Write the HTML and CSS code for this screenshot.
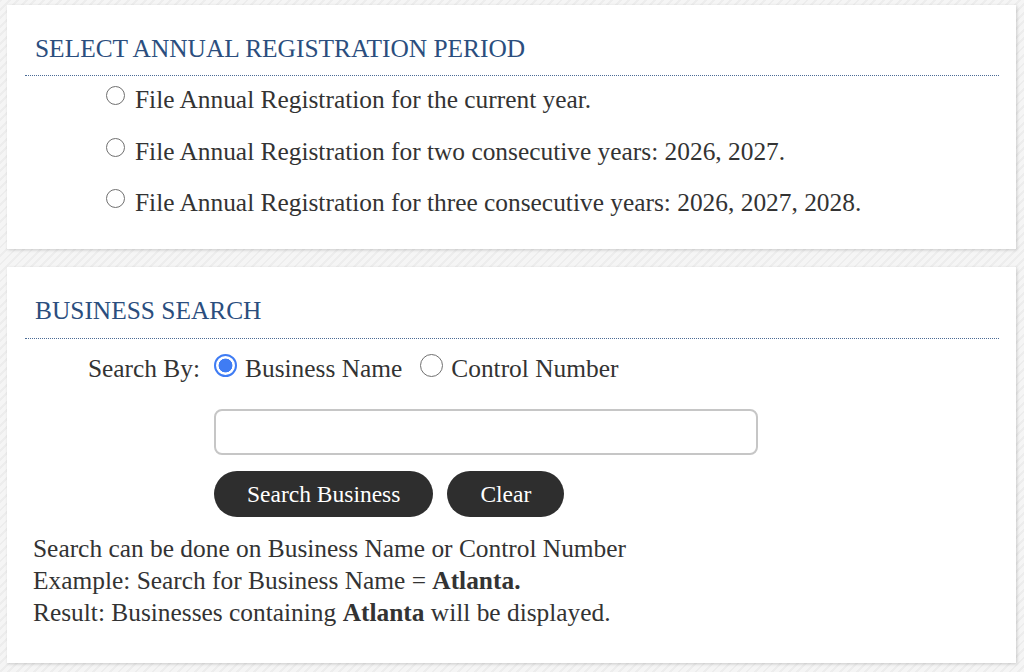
FILE: index.html
```html
<!DOCTYPE html>
<html lang="en">
<head>
<meta charset="utf-8">
<title>Annual Registration</title>
<link rel="stylesheet" href="styles.css">
</head>
<body>
<main class="page">
  <section class="panel panel-period">
    <h2 class="panel-title">SELECT ANNUAL REGISTRATION PERIOD</h2>
    <div class="options">
      <label class="option"><input type="radio" name="period" class="radio radio-sm"><span>File Annual Registration for the current year.</span></label>
      <label class="option"><input type="radio" name="period" class="radio radio-sm"><span>File Annual Registration for two consecutive years: 2026, 2027.</span></label>
      <label class="option"><input type="radio" name="period" class="radio radio-sm"><span>File Annual Registration for three consecutive years: 2026, 2027, 2028.</span></label>
    </div>
  </section>

  <section class="panel panel-search">
    <h2 class="panel-title">BUSINESS SEARCH</h2>
    <form class="search-form" onsubmit="return false;">
      <span class="search-label">Search By:</span>
      <div class="search-by">
        <label class="choice"><input type="radio" name="by" class="radio radio-lg" checked><span>Business Name</span></label>
        <label class="choice"><input type="radio" name="by" class="radio radio-lg"><span>Control Number</span></label>
      </div>
      <input type="text" class="search-input" aria-label="Search text">
      <div class="actions">
        <button type="button" class="btn">Search Business</button>
        <button type="button" class="btn">Clear</button>
      </div>
    </form>
    <div class="info">
      <div>Search can be done on Business Name or Control Number</div>
      <div>Example: Search for Business Name = <strong>Atlanta.</strong></div>
      <div>Result: Businesses containing <strong>Atlanta</strong> will be displayed.</div>
    </div>
  </section>
</main>
</body>
</html>
```

FILE: styles.css
```css
html, body {
  margin: 0;
  padding: 0;
}

body {
  font-family: "Liberation Serif", "Times New Roman", serif;
  color: #333333;
  background-color: #f1f1f1;
  background-image: repeating-linear-gradient(135deg, #ededed 0, #ededed 2px, #f5f5f5 2px, #f5f5f5 6px);
  min-height: 672px;
}

.page {
  display: flex;
  flex-direction: column;
  gap: 18px;
  padding: 5px 8px 0 7px;
}

.panel {
  background: #ffffff;
  box-shadow: 1px 1px 3px rgba(0, 0, 0, 0.18);
  padding: 29px 17px 32px 18px;
}

.panel-title {
  margin: 0;
  font-weight: normal;
  font-size: 25.4px;
  line-height: 29px;
  color: #2b4e7e;
  padding: 0 0 12px 10px;
  border-bottom: 1px dotted #4b6b96;
}

.panel-search .panel-title {
  padding-bottom: 13px;
}

.panel-search {
  padding-bottom: 35px;
}

.options {
  display: flex;
  flex-direction: column;
  gap: 22.5px;
  padding: 9px 0 0 81px;
}

.option {
  display: flex;
  align-items: flex-start;
  font-size: 25.4px;
  line-height: 29px;
}

.radio {
  appearance: none;
  -webkit-appearance: none;
  box-sizing: border-box;
  border-radius: 50%;
  border: 1.5px solid #707070;
  background: #ffffff;
  flex: none;
}

.radio-sm {
  width: 19px;
  height: 19px;
  margin: 1px 10px 0 0;
}

.radio-lg {
  width: 23px;
  height: 23px;
  margin: 0 8px 0 0;
}

.radio:checked {
  border: 2.5px solid #3f7cf4;
  background: radial-gradient(circle closest-side, #3f7cf4 0, #3f7cf4 70%, #ffffff 76%);
}

.search-form {
  display: grid;
  grid-template-columns: 175px 1fr;
  column-gap: 14px;
  margin-top: 15px;
}

.search-label {
  grid-column: 1;
  text-align: right;
  font-size: 25.4px;
  line-height: 29px;
}

.search-by {
  grid-column: 2;
  display: flex;
  gap: 18px;
}

.choice {
  display: flex;
  align-items: flex-start;
  font-size: 25.4px;
  line-height: 29px;
}

.search-input {
  grid-column: 2;
  box-sizing: border-box;
  width: 544px;
  height: 46px;
  margin-top: 26px;
  border: 2px solid #c6c6c6;
  border-radius: 8px;
  font-family: inherit;
  font-size: 22px;
  padding: 0 10px;
  outline: none;
}

.actions {
  grid-column: 2;
  display: flex;
  gap: 14px;
  margin-top: 16px;
}

.btn {
  height: 46px;
  padding: 0 33px;
  border: none;
  border-radius: 23px;
  background: #2e2e2e;
  color: #ffffff;
  font-family: "Liberation Serif", "Times New Roman", serif;
  font-size: 23.5px;
  line-height: 46px;
  cursor: pointer;
}

.info {
  margin-top: 15px;
  padding-left: 8px;
  font-size: 25.4px;
  line-height: 32px;
}
```
